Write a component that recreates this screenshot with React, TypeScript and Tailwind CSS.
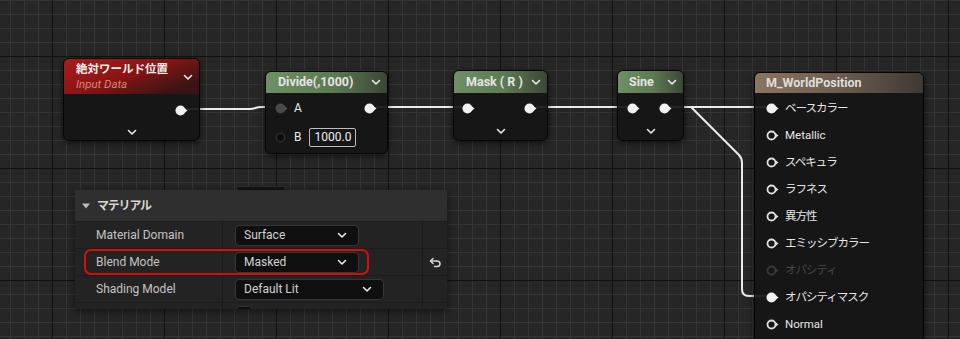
import React from "react";

const FONT = "font-['Roboto','Noto_Sans_CJK_JP',sans-serif]";

function Chevron({ className = "" }: { className?: string }) {
  return (
    <svg width="10" height="7" viewBox="0 0 10 7" className={className}>
      <polyline points="1.5,1.5 5,5 8.5,1.5" fill="none" stroke="#e8e8e8" strokeWidth="1.6" strokeLinecap="round" strokeLinejoin="round" />
    </svg>
  );
}

type PinKind = "filled" | "hollow" | "grey" | "dark" | "dim";

function Pin({ kind }: { kind: PinKind }) {
  const arrow = kind === "dim" ? "#3a3a3a" : kind === "grey" ? "#555" : kind === "dark" ? "#2a2a2a" : "#e8e8e8";
  if (kind === "filled") {
    return (
      <svg width="13" height="11" viewBox="0 0 13 11" className="shrink-0">
        <circle cx="5.5" cy="5.5" r="5" fill="#f2f2f2" />
        <polygon points="10,3.5 12.5,5.5 10,7.5" fill="#f2f2f2" />
      </svg>
    );
  }
  if (kind === "grey") {
    return (
      <svg width="13" height="11" viewBox="0 0 13 11" className="shrink-0">
        <circle cx="5.5" cy="5.5" r="5" fill="#4a4a4a" />
        <polygon points="10,3.5 12.5,5.5 10,7.5" fill={arrow} />
      </svg>
    );
  }
  if (kind === "dark") {
    return (
      <svg width="13" height="11" viewBox="0 0 13 11" className="shrink-0">
        <circle cx="5.5" cy="5.5" r="4.2" fill="#0c0c0c" stroke="#2e2e2e" strokeWidth="1.6" />
      </svg>
    );
  }
  const stroke = kind === "dim" ? "#3a3a3a" : "#e0e0e0";
  return (
    <svg width="13" height="11" viewBox="0 0 13 11" className="shrink-0">
      <circle cx="5.5" cy="5.5" r="4" fill="#161616" stroke={stroke} strokeWidth="1.8" />
      <polygon points="10,3.5 12.5,5.5 10,7.5" fill={stroke} />
    </svg>
  );
}

function Grid() {
  const v: number[] = [];
  for (let x = 10; x < 960; x += 14) v.push(x);
  const h: number[] = [];
  for (let y = 0; y < 339; y += 14) h.push(y);
  return (
    <svg width="960" height="339" className="absolute inset-0">
      <rect width="960" height="339" fill="#262626" />
      {v.map((x) => (
        <line key={"v" + x} x1={x + 0.5} y1="0" x2={x + 0.5} y2="339" stroke={(x - 52) % 112 === 0 ? "#111111" : "#353535"} strokeWidth="1" />
      ))}
      {h.map((y) => (
        <line key={"h" + y} x1="0" y1={y + 0.5} x2="960" y2={y + 0.5} stroke={(y - 56) % 112 === 0 ? "#111111" : "#353535"} strokeWidth="1" />
      ))}
      {v.filter((x) => (x - 52) % 112 === 0).map((x) => (
        <line key={"V" + x} x1={x + 0.5} y1="0" x2={x + 0.5} y2="339" stroke="#111111" strokeWidth="1" />
      ))}
      {h.filter((y) => (y - 56) % 112 === 0).map((y) => (
        <line key={"H" + y} x1="0" y1={y + 0.5} x2="960" y2={y + 0.5} stroke="#111111" strokeWidth="1" />
      ))}
      <g fill="none" stroke="#ececec" strokeWidth="2" strokeLinecap="round" strokeLinejoin="round">
        <path d="M188,109 L250,109 C255,109 256,107 261,107 L266,107" />
        <path d="M266,107 L274,107" stroke="#777" />
        <path d="M376,107 L462,107" />
        <path d="M536,107 L627,107" />
        <path d="M671,107 L766,107" />
        <path d="M671,107 L691,107 L739,155 Q742,158 742,163 L742,289 Q742,296 749,296 L766,296" />
      </g>
    </svg>
  );
}

const nodeBase = "absolute rounded-[6px] border border-[#050505] bg-[#161616]/[0.93] shadow-[0_2px_6px_rgba(0,0,0,0.6)] overflow-hidden";
const greenHeader = "bg-[linear-gradient(to_right,#6f8f64,#5d7a53_55%,#3a4735)]";

function UndoIcon() {
  return (
    <svg width="13" height="11" viewBox="0 0 13 11">
      <path d="M4,1.5 L1.5,4 L4,6.5" fill="none" stroke="#d8d8d8" strokeWidth="1.5" strokeLinejoin="round" strokeLinecap="round" />
      <path d="M1.8,4 L8,4 Q11,4 11,6.75 Q11,9.5 8,9.5 L5.5,9.5" fill="none" stroke="#d8d8d8" strokeWidth="1.5" strokeLinecap="round" />
    </svg>
  );
}

function Dropdown({ label, width }: { label: string; width: string }) {
  return (
    <div className={`${width} h-[21px] rounded-[4px] border border-[#363636] bg-[#0f0f0f] flex items-center justify-between pl-[8px] pr-[11px]`}>
      <span className="text-[12px] text-[#d2d2d2]">{label}</span>
      <Chevron />
    </div>
  );
}

export default function App() {
  const outputs: { label: string; kind: PinKind; jp: boolean }[] = [
    { label: "ベースカラー", kind: "filled", jp: true },
    { label: "Metallic", kind: "hollow", jp: false },
    { label: "スペキュラ", kind: "hollow", jp: true },
    { label: "ラフネス", kind: "hollow", jp: true },
    { label: "異方性", kind: "hollow", jp: true },
    { label: "エミッシブカラー", kind: "hollow", jp: true },
    { label: "オパシティ", kind: "dim", jp: true },
    { label: "オパシティマスク", kind: "filled", jp: true },
    { label: "Normal", kind: "hollow", jp: false },
  ];

  return (
    <div className={`relative w-[960px] h-[339px] overflow-hidden bg-[#262626] ${FONT}`}>
      <Grid />

      {/* 絶対ワールド位置 */}
      <div className={`${nodeBase} left-[63px] top-[58px] w-[137px] h-[83px]`}>
        <div className="h-[35px] bg-[linear-gradient(160deg,#a81d1d,#8c1414_45%,#3a1414_85%)] flex items-center justify-between pl-[12px] pr-[6px]">
          <div className="flex flex-col leading-none">
            <span className="text-[11.5px] font-bold text-[#eeeeee] leading-[15px]">絶対ワールド位置</span>
            <span className="text-[11.5px] italic text-[#d4877a] leading-[15px]">Input Data</span>
          </div>
          <Chevron className="mt-[2px]" />
        </div>
        <div className="h-[32px] flex items-center justify-end pr-[11px]">
          <Pin kind="filled" />
        </div>
        <div className="h-[12px] flex items-center justify-center">
          <Chevron />
        </div>
      </div>

      {/* Divide */}
      <div className={`${nodeBase} left-[265px] top-[71px] w-[123px] h-[83px]`}>
        <div className={`h-[21px] ${greenHeader} flex items-center justify-between pl-[12px] pr-[6px]`}>
          <span className="text-[12.5px] font-bold text-[#e4e4e4]">Divide(,1000)</span>
          <Chevron />
        </div>
        <div className="h-[30px] flex items-center justify-between pl-[9px] pr-[10px]">
          <div className="flex items-center gap-[6px]">
            <Pin kind="grey" />
            <span className="text-[12px] text-[#e8e8e8]">A</span>
          </div>
          <Pin kind="filled" />
        </div>
        <div className="h-[28px] flex items-center pl-[9px] gap-[6px]">
          <Pin kind="dark" />
          <span className="text-[12px] text-[#e8e8e8]">B</span>
          <div className="ml-[2px] h-[19px] w-[47px] border border-[#bdbdbd] rounded-[2px] flex items-center justify-center text-[12px] text-[#f0f0f0]">1000.0</div>
        </div>
      </div>

      {/* Mask (R) */}
      <div className={`${nodeBase} left-[453px] top-[70px] w-[95px] h-[71px]`}>
        <div className={`h-[22px] ${greenHeader} flex items-center justify-between pl-[12px] pr-[6px]`}>
          <span className="text-[12.5px] font-bold text-[#e4e4e4]">Mask ( R )</span>
          <Chevron />
        </div>
        <div className="h-[30px] flex items-center justify-between pl-[8px] pr-[10px]">
          <Pin kind="filled" />
          <Pin kind="filled" />
        </div>
        <div className="h-[16px] flex items-center justify-center">
          <Chevron />
        </div>
      </div>

      {/* Sine */}
      <div className={`${nodeBase} left-[617px] top-[70px] w-[67px] h-[71px]`}>
        <div className={`h-[22px] ${greenHeader} flex items-center justify-between pl-[11px] pr-[6px]`}>
          <span className="text-[12.5px] font-bold text-[#e4e4e4]">Sine</span>
          <Chevron />
        </div>
        <div className="h-[30px] flex items-center justify-between pl-[9px] pr-[11px]">
          <Pin kind="filled" />
          <Pin kind="filled" />
        </div>
        <div className="h-[16px] flex items-center justify-center">
          <Chevron />
        </div>
      </div>

      {/* M_WorldPosition */}
      <div className={`${nodeBase} left-[754px] top-[72px] w-[170px] h-[290px]`}>
        <div className="h-[20px] bg-[linear-gradient(to_right,#8a7560,#6c5d4e_50%,#3f3933)] flex items-center pl-[11px]">
          <span className="text-[12.5px] font-bold text-[#dedede]">M_WorldPosition</span>
        </div>
        <div className="pt-[2px] flex flex-col">
          {outputs.map((o) => (
            <div key={o.label} className="h-[27px] flex items-center pl-[11px] gap-[6px]">
              <Pin kind={o.kind} />
              <span
                className={`${o.jp ? "text-[11.5px] tracking-[-1px]" : "text-[11.5px]"} ${o.kind === "dim" ? "text-[#474747]" : "text-[#e6e6e6]"}`}
              >
                {o.label}
              </span>
            </div>
          ))}
        </div>
      </div>

      {/* Details panel */}
      <div className="absolute left-[75px] top-[190px] w-[372px] h-[119px] bg-[#232323] overflow-hidden shadow-[0_2px_8px_rgba(0,0,0,0.5)]">
        <div className="h-[32px] bg-[#2f2f2f] flex items-center pl-[6px] gap-[6px] border-b border-[#1c1c1c]">
          <svg width="10" height="8" viewBox="0 0 10 8">
            <polygon points="1,1.5 9,1.5 5,6.5" fill="#bdbdbd" />
          </svg>
          <span className="text-[12px] tracking-[-1.2px] font-bold text-[#d6d6d6]">マテリアル</span>
        </div>
        {[
          { label: "Material Domain", value: "Surface", w: "w-[124px]", reset: false },
          { label: "Blend Mode", value: "Masked", w: "w-[124px]", reset: true },
          { label: "Shading Model", value: "Default Lit", w: "w-[149px]", reset: false },
        ].map((r) => (
          <div key={r.label} className="h-[27px] flex border-b border-[#1c1c1c]">
            <div className="w-[148px] flex items-center pl-[21px] border-r border-[#1a1a1a]">
              <span className="text-[12px] text-[#c4c4c4]">{r.label}</span>
            </div>
            <div className="w-[200px] flex items-center pl-[12px] border-r border-[#1a1a1a]">
              <Dropdown label={r.value} width={r.w} />
            </div>
            <div className="flex-1 flex items-center justify-center pl-[1px]">
              {r.reset && <UndoIcon />}
            </div>
          </div>
        ))}
        <div className="h-[10px] flex">
          <div className="w-[148px] border-r border-[#1a1a1a]" />
          <div className="w-[200px] pl-[13px] pt-[3px] border-r border-[#1a1a1a]">
            <div className="w-[16px] h-[10px] rounded-[3px] bg-[#0e0e0e] border border-[#333]" />
          </div>
        </div>
        <div className="absolute left-[9px] top-[59px] w-[285px] h-[26px] rounded-[7px] border-2 border-[#d40f0f]" />
      </div>
      <div className="absolute left-[236px] top-[186px] w-[50px] h-[5px] rounded-b-[3px] bg-[#121212] border border-[#2c2c2c]" />
    </div>
  );
}
